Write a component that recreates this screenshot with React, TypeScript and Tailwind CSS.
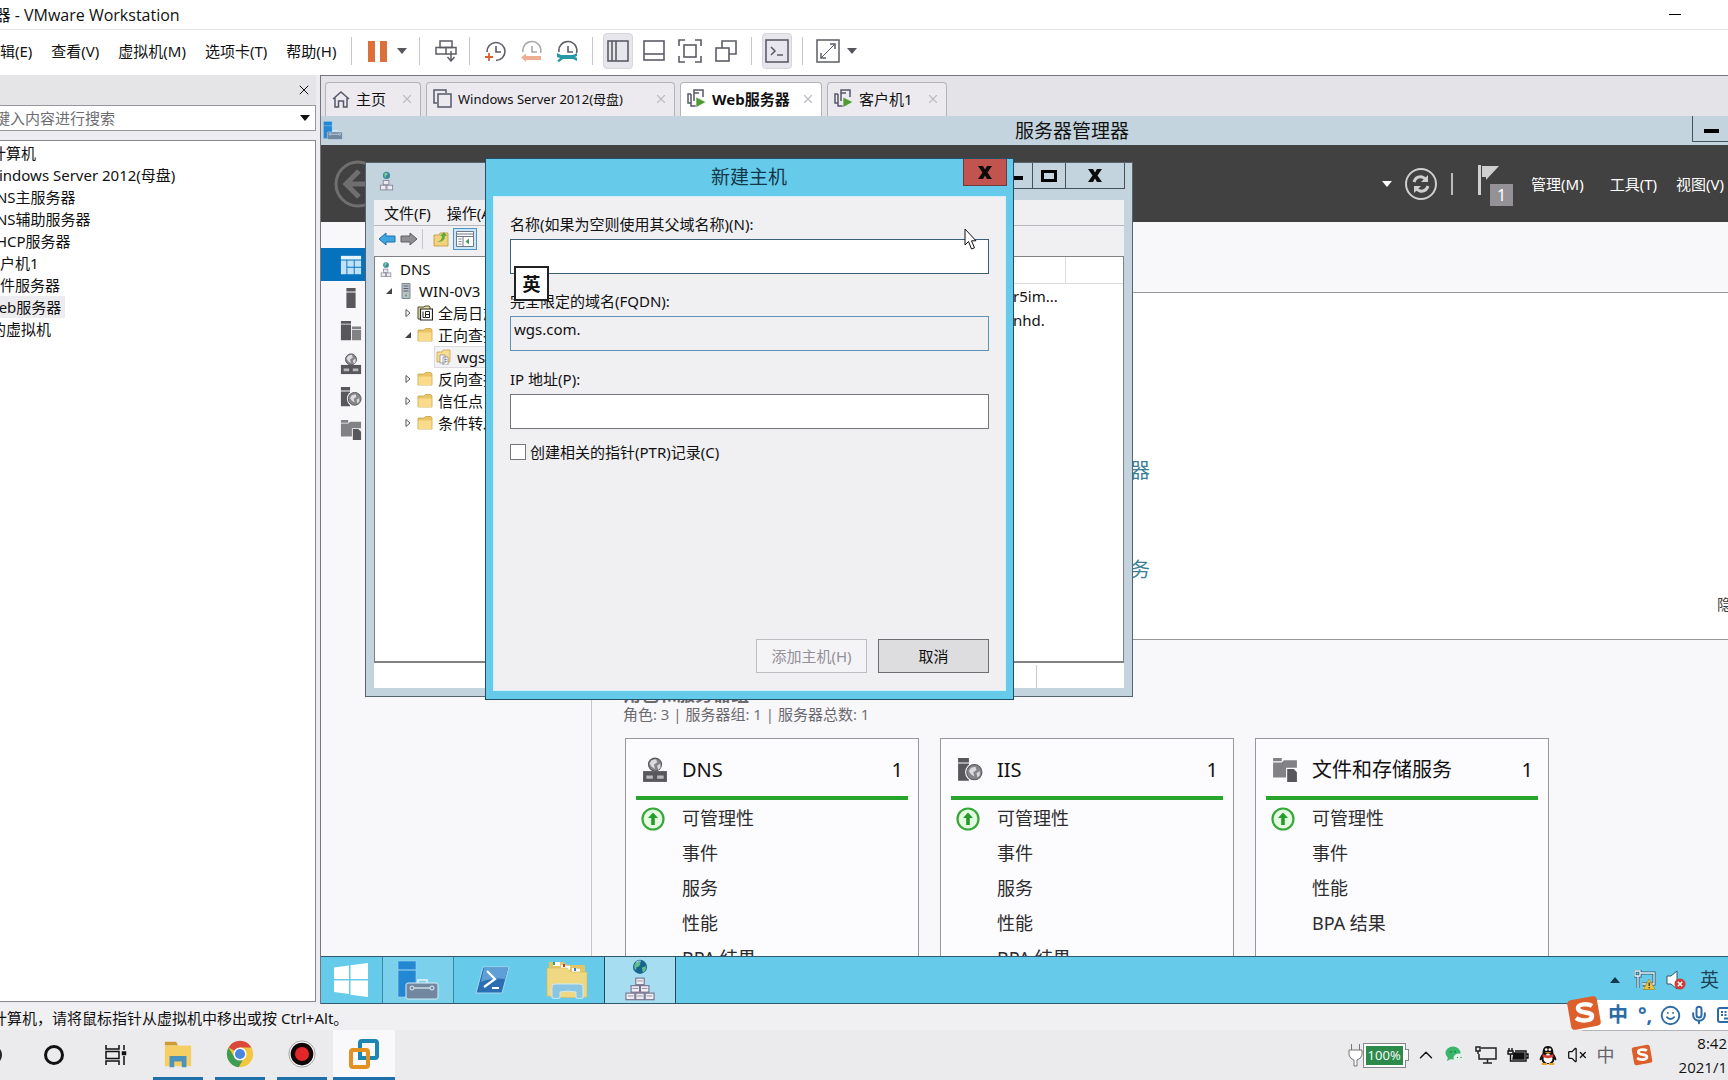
import React from "react";
import { ChevronUp, Mic, Smile, VolumeX, X } from "lucide-react";
import { clsx } from "clsx";

type IconProps = { className?: string };

/* ---------- icons ---------- */

const Caret = ({ className }: IconProps) => (
  <svg viewBox="0 0 10 6" className={clsx("h-[6px] w-[10px] shrink-0 fill-current", className)}>
    <path d="M0 0h10L5 6z" />
  </svg>
);

const SendKeysIcon = () => (
  <svg viewBox="0 0 22 22" className="size-[22px]" fill="none" stroke="#5c5d66" strokeWidth="1.5">
    <rect x="5" y="1" width="12" height="6.5" />
    <rect x="1" y="7.5" width="10" height="6.5" />
    <path d="M11 7.5h10V14H11M16 11v9M12.5 17l3.500 4 3.500-4" />
  </svg>
);

const ClockIcon = ({ cut, faded, children }: { cut?: boolean; faded?: boolean; children: React.ReactNode }) => (
  <svg viewBox="0 0 22 22" className="size-[22px]" fill="none">
    <path
      d={cut ? "M3 12a9 9 0 1 1 17.500 1M12 6v6h5" : "M3 12a9 9 0 1 1 9 8.500M12 6v6h5"}
      stroke={faded ? "#a9a6a8" : "#5c5d66"}
      strokeWidth="1.6"
    />
    {children}
  </svg>
);

const LibraryPaneIcon = () => (
  <svg viewBox="0 0 22 22" className="size-[22px]" fill="none" stroke="#5c5d66" strokeWidth="1.6">
    <rect x="1" y="1" width="20" height="20" />
    <path d="M5 1v20M9 1v20" />
  </svg>
);

const ThumbnailBarIcon = () => (
  <svg viewBox="0 0 22 22" className="size-[22px]" fill="none" stroke="#5c5d66" strokeWidth="1.6">
    <rect x="1" y="1" width="20" height="19" />
    <path d="M1 14h20" />
  </svg>
);

const FullFrameIcon = () => (
  <svg viewBox="0 0 24 24" className="size-[24px]" fill="none" stroke="#5c5d66" strokeWidth="1.6">
    <path d="M1 7V1h6M17 1h6v6M23 17v6h-6M7 23H1v-6" />
    <rect x="6" y="6" width="12" height="12" />
  </svg>
);

const UnityIcon = () => (
  <svg viewBox="0 0 22 22" className="size-[22px]" fill="none" stroke="#5c5d66" strokeWidth="1.6">
    <rect x="1" y="8" width="13" height="13" />
    <path d="M7 8V1h14v13h-7" />
  </svg>
);

const ConsoleIcon = () => (
  <svg viewBox="0 0 24 24" className="size-[24px]" fill="none" stroke="#5c5d66" strokeWidth="1.6">
    <rect x="1" y="1" width="22" height="22" />
    <path d="M6 8l4 4-4 4M12 16h6" />
  </svg>
);

const StretchIcon = () => (
  <svg viewBox="0 0 24 24" className="size-[24px]" fill="none" stroke="#5c5d66" strokeWidth="1.5">
    <rect x="1" y="1" width="22" height="22" />
    <path d="M14 5h5v5M10 19H5v-5" />
    <path d="M19 5L5 19" strokeWidth="1" />
  </svg>
);

const HomeIcon = () => (
  <svg viewBox="0 0 18 18" className="size-[18px] shrink-0" fill="none" stroke="#55586a" strokeWidth="1.5">
    <path d="M1 9l8-7 8 7M3 8v9h3.500v-6h5v6H15V8" />
  </svg>
);

const VmIcon = ({ running }: { running?: boolean }) => (
  <svg viewBox="0 0 19 19" className="size-[19px] shrink-0" fill="none" stroke="#55586a" strokeWidth="1.5">
    {running ? (
      <>
        <path d="M7 4V1h9v7M4 14H1V5h3M7 12V4h5M4 5v12h6" />
        <path d="M9 8l10 5-10 5.500z" fill="#4f9a35" stroke="#fff" strokeWidth="0.6" />
      </>
    ) : (
      <>
        <path d="M4 14H1V1h12v3" />
        <rect x="5" y="5" width="13" height="13" />
      </>
    )}
  </svg>
);

const ServerManagerIcon = ({ className }: IconProps) => (
  <svg viewBox="0 0 42 40" className={className}>
    <path fill="#2387d3" stroke="#9fd6f2" strokeWidth="0.6" d="M1 1h18v36H1z" />
    <path d="M1 10h18" stroke="#a9dcf5" />
    <path d="M21 23v-3h9v3" fill="none" stroke="#cfeaf7" strokeWidth="2" />
    <rect x="9" y="23" width="32" height="16" rx="2" fill="#7188a0" stroke="#d6edf8" />
    <path d="M13 28h24" stroke="#e6f2f8" strokeWidth="1.2" />
    <circle cx="15" cy="28" r="2" fill="#7188a0" stroke="#e6f2f8" />
    <circle cx="35" cy="28" r="2" fill="#7188a0" stroke="#e6f2f8" />
  </svg>
);

/* globe on top of a pyramid of servers */
const DnsTreeIcon = ({ className }: IconProps) => (
  <svg viewBox="0 0 32 44" className={className}>
    <circle cx="16" cy="8" r="7.500" fill="#17658f" />
    <path d="M11 4c3-3 7-1 5 2s-4 1-4 4-4-1-1-6zM18 9l4-2c1 4-1 6-3 7z" fill="#63c08c" />
    <path d="M12 3q3-2 5-1" stroke="#d8f2f5" fill="none" />
    <g fill="#efecf4" stroke="#77738a" strokeWidth="1.2">
      <rect x="11.500" y="20" width="9" height="7" />
      <rect x="6.500" y="28" width="9" height="7" />
      <rect x="16.500" y="28" width="9" height="7" />
      <rect x="1" y="36" width="9.500" height="7" />
      <rect x="11.500" y="36" width="9" height="7" />
      <rect x="21.500" y="36" width="9.500" height="7" />
    </g>
    <path d="M13 23h6M8 31h6M18 31h6M3 39h6M13 39h6M23 39h6" stroke="#77738a" strokeWidth="0.8" />
  </svg>
);

const SmallDnsIcon = ({ className }: IconProps) => (
  <svg viewBox="0 0 16 20" className={className}>
    <circle cx="8" cy="4" r="3.800" fill="#3b8a9c" />
    <path d="M6 2c2-2 4 0 3 1s-2 1-2 3-2-1-1-4z" fill="#7fce95" />
    <g fill="#eceaf0" stroke="#8d879a">
      <rect x="4.500" y="9.500" width="6" height="4.500" />
      <rect x="1.500" y="14.500" width="6" height="5" />
      <rect x="8.500" y="14.500" width="6" height="5" />
    </g>
  </svg>
);

const FolderIcon = () => (
  <svg viewBox="0 0 16 14" className="h-[14px] w-[16px] shrink-0">
    <path d="M1 2h6l1.500-1.500H14L15 2v11H1z" fill="#e9c567" stroke="#c9a449" strokeWidth="0.8" />
    <path d="M1.500 4.500h13V13h-13z" fill="#fadb8b" />
  </svg>
);

const ZoneIcon = () => (
  <svg viewBox="0 0 16 16" className="size-[16px] shrink-0">
    <path d="M1 3h5l1-2h7v12H1z" fill="#f7dc92" stroke="#caa650" strokeWidth="0.8" />
    <path d="M4 6h5v8H4zM7 8h5v8H7z" fill="#fff" stroke="#8c8c96" strokeWidth="0.8" />
    <path d="M8.500 10.500h2.500M8.500 12.500h2.500" stroke="#6a86b8" strokeWidth="0.8" />
  </svg>
);

const LogIcon = () => (
  <svg viewBox="0 0 16 16" className="size-[16px] shrink-0">
    <path d="M1 2h6l1-1h4l1 1v12H1z" fill="#e9dfa4" stroke="#4c4832" />
    <path d="M3.500 4h12v11h-12z" fill="#fff" stroke="#222" strokeWidth="1.2" />
    <path d="M6 6.500v6M8.500 6.500h4v6h-4zM8.500 9.500h4M6 12.500h2" stroke="#222" fill="none" />
  </svg>
);

const HostIcon = () => (
  <svg viewBox="0 0 10 16" className="h-[16px] w-[10px] shrink-0">
    <path d="M1 .5h8v15H1z" fill="#b9c1c8" stroke="#7e8890" />
    <path d="M2.500 3h5M2.500 5.500h5M2.500 8h5" stroke="#56616b" />
    <circle cx="5" cy="12.500" r="1" fill="#5c9b63" />
  </svg>
);

const Globe = ({ cx, cy, r }: { cx: number; cy: number; r: number }) => (
  <g>
    <circle cx={cx} cy={cy} r={r} fill="#85858a" stroke="#58585c" />
    <path
      d={`M${cx - 3} ${cy - 4}l4-1 1 3-3 2 1 4-3-2-2-3zM${cx + 2} ${cy + 1}l3-2v4l-2 2z`}
      fill="#dcdce0"
    />
  </g>
);

const RoleIcon = ({ kind, className }: IconProps & { kind: string }) => (
  <svg viewBox="0 0 24 24" className={className} fill="#58585c">
    {kind === "dashboard" && (
      <>
        <path fill="#e6f5fd" d="M1 2h22v4H1z" />
        <path fill="#bfe2f6" d="M1 7h6v15H1zM8 7h7v7H8zM16 7h7v7h-7zM8 15h7v7H8zM16 15h7v7h-7z" />
      </>
    )}
    {kind === "local" && <path d="M7 1h10v4H7zM7 6h10v17H7z" />}
    {kind === "all" && (
      <>
        <path d="M1 1h11v3H1zM1 5h11v17H1z" />
        <path fill="#828286" d="M13 7h10v3H13zM13 11h10v11H13z" />
      </>
    )}
    {kind === "dns" && (
      <>
        <Globe cx={12} cy={7} r={6} />
        <path d="M1 13h22v10H1z" />
        <path fill="#b9b9bd" d="M4 17h6v3H4zM14 17h6v3h-6z" />
      </>
    )}
    {kind === "iis" && (
      <>
        <path d="M1 1h10v4H1zM1 6h10v16H1z" />
        <circle cx="16" cy="14" r="8.500" fill="#fbfafd" />
        <Globe cx={16} cy={14} r={7} />
      </>
    )}
    {kind === "files" && (
      <>
        <path fill="#828286" d="M1 1h8v3H1zM1 5h8l2-2h12v7H13v9H1z" />
        <path d="M14 11h6l3 3v9h-9z" />
      </>
    )}
  </svg>
);

const UpCircle = () => (
  <svg viewBox="0 0 24 24" className="size-[24px]">
    <circle cx="12" cy="12" r="10.500" fill="#e4fbe2" stroke="#35a839" strokeWidth="2.2" />
    <path d="M12 5.500l5 5.500h-3.200v7h-3.600v-7H7z" fill="#259b2c" />
  </svg>
);

const SogouIcon = ({ className }: IconProps) => (
  <svg viewBox="0 0 36 36" className={className}>
    <rect x="3" y="3" width="30" height="30" rx="4" fill="#dd5f2b" transform="rotate(-10 18 18)" />
    <path
      d="M26 11c-4-3-14-2-14 2 0 6 14 3 14 8 0 6-12 5-16 2"
      fill="none"
      stroke="#fff"
      strokeWidth="4.5"
    />
  </svg>
);

const ExplorerIcon = ({ className }: IconProps) => (
  <svg viewBox="0 0 32 32" className={className}>
    <path fill="#d09a33" d="M2 3h12l2 4H2z" />
    <path fill="#f5cf63" d="M2 7h28v22H2z" />
    <path fill="#4b92bd" d="M7 30V18h18v12h-5v-6h-8v6z" />
  </svg>
);

const ServerExplorerIcon = () => (
  <svg viewBox="0 0 42 40" className="h-[40px] w-[42px]">
    <path fill="#e3c566" d="M3 2h14l4 3h18v12H3z" />
    <path fill="#fff" d="M7 2h7v4H7zM15 5l9 1v4h-9zM26 8l8 1v4h-8z" />
    <path fill="#c23d2e" d="M17 4h2v3h-2z" />
    <path fill="#4b9b50" d="M7 2h2v3H7z" />
    <path fill="#3d7fc0" d="M28 8h2v3h-2z" />
    <path fill="#f0d882" stroke="#d5b95c" strokeWidth="0.6" d="M1 8h20l4 4h16v25q-20 2-40-1z" />
    <path
      fill="#8ac6e2"
      stroke="#c9ecfa"
      d="M6 38V27q0-3 3-3h25q3 0 3 3v11q-4 1-7 0v-6q-8-2-16 0v6q-4 1-8 0z"
    />
  </svg>
);

const PowerShellIcon = () => (
  <svg viewBox="0 0 36 30" className="h-[30px] w-[36px]">
    <path fill="#2a6fb4" stroke="#a8d8f0" d="M9 2h26l-7 26H2z" />
    <path fill="#5f9fd6" d="M10 3h24l-3 11Q18 12 7 17z" />
    <path d="M13 6l8 8-11 8M18 23h7" fill="none" stroke="#fff" strokeWidth="2.2" />
  </svg>
);

const WindowsLogo = () => (
  <svg viewBox="0 0 34 34" className="size-[34px]" fill="#fff">
    <path d="M0 4.500L15 2.500V16H0zM16.500 2.300L34 0v16H16.500zM0 17.500h15V31L0 29zM16.500 17.500H34V34l-17.500-2.300z" />
  </svg>
);

const ChromeIcon = () => (
  <svg viewBox="0 0 32 32" className="size-[28px]">
    <circle cx="16" cy="16" r="15" fill="#f4c63d" />
    <path d="M16 16L3 8.500A15 15 0 0 1 29 8.500H16z" fill="#d9483b" />
    <path d="M3 8.500A15 15 0 0 0 14.500 31L21 19.500 9.500 19.500z" fill="#3f9c55" />
    <circle cx="16" cy="16" r="7.500" fill="#fff" />
    <circle cx="16" cy="16" r="5.800" fill="#4a85e0" />
  </svg>
);

const RecordIcon = () => (
  <svg viewBox="0 0 32 32" className="size-[28px]">
    <circle cx="16" cy="16" r="15" fill="#fff" stroke="#999" />
    <circle cx="16" cy="16" r="13" fill="#120707" />
    <circle cx="16" cy="16" r="8" fill="#e3262a" />
  </svg>
);

const VmwareIcon = () => (
  <svg viewBox="0 0 32 32" className="size-[32px]" fill="none" strokeWidth="4">
    <rect x="12" y="3" width="17" height="17" rx="2" stroke="#1b86b4" />
    <rect x="3" y="12" width="17" height="17" rx="2" stroke="#e2901f" />
    <path d="M12 15v5h5" stroke="#1b86b4" />
  </svg>
);

const TaskViewIcon = () => (
  <svg viewBox="0 0 22 20" className="h-[20px] w-[22px]" fill="none" stroke="#111" strokeWidth="1.5">
    <path d="M1 0v4h13V0M1 20v-4h13v4M1 6.500h13v7H1zM19 0v5M19 11v9" />
    <path d="M17.500 7h3v2.500h-3z" fill="#111" />
  </svg>
);

const QqIcon = () => (
  <svg viewBox="0 0 20 22" className="h-[20px] w-[18px]">
    <path d="M10 1c5 0 6 4 6 8 2 3 4 6 3 8l-2-1c0 3-2 5-7 5s-7-2-7-5l-2 1c-1-2 1-5 3-8 0-4 1-8 6-8z" fill="#111" />
    <ellipse cx="10" cy="15" rx="5" ry="5" fill="#fff" />
    <path d="M4 10q6 3 12 0v3q-6 3-12 0z" fill="#d83a34" />
    <circle cx="8" cy="5" r="1.500" fill="#fff" />
    <circle cx="12" cy="5" r="1.500" fill="#fff" />
    <path d="M6 8h8l-4 2zM3 20h6v2H3zM11 20h6v2h-6z" fill="#eaa22d" />
  </svg>
);

const WechatIcon = () => (
  <svg viewBox="0 0 20 18" className="h-[18px] w-[20px]">
    <ellipse cx="8" cy="7" rx="7.500" ry="6.500" fill="#39b56b" />
    <path d="M3 11l-1 4 4-2z" fill="#39b56b" />
    <ellipse cx="14" cy="12" rx="5.500" ry="4.500" fill="#e6efe9" />
    <path d="M5 5h1.500v1.500H5zM9.500 5H11v1.500H9.500zM12 11h1v1h-1zM15.500 11h1v1h-1z" fill="#1f7a44" />
  </svg>
);

const MonitorIcon = () => (
  <svg viewBox="0 0 22 18" className="h-[18px] w-[22px]" fill="none" stroke="#222" strokeWidth="1.5">
    <path d="M6 2h15v11H4V8M8 17h9M12.500 13v4M1 1h4v4H1zM3 5v3" />
  </svg>
);

const PlugBatteryIcon = () => (
  <svg viewBox="0 0 22 16" className="h-[16px] w-[22px]" fill="none" stroke="#111" strokeWidth="1.4">
    <path d="M2 1v3M5 1v3M1 4h5v3H1zM3.500 7v7H19V4H8M19 7h2v4h-2" />
    <path fill="#111" d="M7 6h10v6H6z" />
  </svg>
);

const PowerPlugIcon = () => (
  <svg viewBox="0 0 15 24" className="h-[24px] w-[15px]" fill="#fff" stroke="#777" strokeWidth="1">
    <path d="M3.500 1v6M11.500 1v6M1 7h13v5q-1 4-5 5v6H6v-6q-4-1-5-5z" />
  </svg>
);

const KeyboardIcon = () => (
  <svg viewBox="0 0 22 16" className="h-[16px] w-[22px] shrink-0">
    <rect x="1" y="1" width="20" height="14" rx="2" fill="none" stroke="#2c6ba5" strokeWidth="2" />
    <path d="M4 5h14M4 8h14" stroke="#2c6ba5" strokeWidth="2" strokeDasharray="2 1.5" />
    <path d="M7 11.500h8" stroke="#2c6ba5" strokeWidth="2" />
  </svg>
);

const GuestNetworkIcon = () => (
  <svg viewBox="0 0 22 20" className="h-[20px] w-[22px]">
    <path d="M6 3h14v11H8M4 6v12M1 1h5v5H1zM9 18h6" fill="none" stroke="#33566a" strokeWidth="3" />
    <path d="M6 3h14v11H8M4 6v12M1 1h5v5H1zM9 18h6" fill="none" stroke="#eaf6fb" strokeWidth="1.3" />
    <path d="M15 9l6 10.500H9.500z" fill="#eec33c" stroke="#a98420" strokeWidth="0.6" />
    <path d="M15.200 12.500v3.500M15.200 17v1.200" stroke="#333" strokeWidth="1.3" />
  </svg>
);

const GuestSpeakerIcon = () => (
  <svg viewBox="0 0 20 20" className="size-[20px]">
    <path d="M1 6h4l6-5v18l-6-5H1z" fill="#fff" stroke="#33566a" />
    <circle cx="14" cy="14" r="5.500" fill="#cf3a36" />
    <path d="M11.800 11.800l4.400 4.400M16.200 11.800l-4.400 4.400" stroke="#fff" strokeWidth="1.6" />
  </svg>
);

const RefreshIcon = () => (
  <svg viewBox="0 0 34 34" className="size-[34px]" fill="none" stroke="#cfcfcf">
    <circle cx="17" cy="17" r="15" strokeWidth="2" />
    <path d="M10 15q2-6 8-5l4 2M24 19q-2 6-8 5l-4-2" strokeWidth="3" />
    <path d="M24 8v7h-7zM10 26v-7h7z" fill="#cfcfcf" stroke="none" />
  </svg>
);

const FlagIcon = () => (
  <svg viewBox="0 0 36 44" className="h-[44px] w-[36px]">
    <path fill="#cfcfcf" d="M1 3h3v30H1zM5 4h17L9 18v-3H5z" />
    <rect x="13" y="22" width="23" height="22" fill="#959297" />
    <text x="24.500" y="39" fontSize="16" textAnchor="middle" fill="#fff">
      1
    </text>
  </svg>
);

const BackIcon = () => (
  <svg viewBox="0 0 48 48" className="size-[48px]" fill="none" stroke="#6f6f6f">
    <circle cx="24" cy="24" r="22" strokeWidth="3" />
    <path d="M38 24H13M25 11L12 24l13 13" strokeWidth="5" />
  </svg>
);

const ArrowIcon = ({ back }: { back?: boolean }) => (
  <svg viewBox="0 0 18 14" className="h-[14px] w-[18px]">
    {back ? (
      <path d="M1 7l7-6v3h9v6H8v3z" fill="#3ea5e0" stroke="#1f6ea8" />
    ) : (
      <path d="M17 7l-7-6v3H1v6h9v3z" fill="#8f8f93" stroke="#5e5e62" />
    )}
  </svg>
);

const UpFolderIcon = () => (
  <svg viewBox="0 0 16 16" className="size-[16px]">
    <path d="M1 4h5l1-2h8v13H1z" fill="#f2d27c" stroke="#b9973f" strokeWidth="0.8" />
    <path d="M4 11q5-1 5-6H7l4-4 3 4h-2q0 6-8 6z" fill="#5fae3d" />
  </svg>
);

const ConsolePaneIcon = () => (
  <svg viewBox="0 0 18 16" className="h-[16px] w-[18px]">
    <path d="M.5.5h17v15H.5z" fill="#fff" stroke="#6d7886" />
    <path d="M1 3h16M1 5.500h16M7 5.500V15" stroke="#6d7886" />
    <path d="M2.500 8h3M2.500 10.500h3M2.500 13h3" stroke="#6d7886" strokeWidth="0.9" />
    <path d="M13 7.500v6L9.500 10.500z" fill="#4c9a58" />
  </svg>
);

/* bold cross used by the guest's window frames */
const CloseGlyph = () => (
  <svg viewBox="0 0 14 13" className="h-[13px] w-[14px]">
    <path d="M0 0h5l2 3.500L9 0h5l-4.500 6.500L14 13H9L7 9.500 5 13H0l4.500-6.500z" fill="#0c0c0c" />
  </svg>
);

/* ---------- host window ---------- */

const MENUS = ["编辑(E)", "查看(V)", "虚拟机(M)", "选项卡(T)", "帮助(H)"];

const Separator = ({ className }: IconProps) => (
  <div className={clsx("w-px shrink-0 bg-[#c9c7cb]", className)} />
);

const ToolButton = ({
  label,
  active,
  children,
}: {
  label: string;
  active?: boolean;
  children: React.ReactNode;
}) => (
  <button
    aria-label={label}
    className={clsx(
      "flex h-9 w-[30px] items-center justify-center rounded-sm",
      active && "border border-[#d5d5dc] bg-[#e6e6ec]"
    )}
  >
    {children}
  </button>
);

const Toolbar = () => (
  <div className="flex h-[45px] shrink-0 items-center bg-white pb-[3px]">
    <nav className="-ml-[15px] flex gap-[19px]">
      {MENUS.map((menu) => (
        <button key={menu} className="shrink-0 whitespace-nowrap">
          {menu}
        </button>
      ))}
    </nav>
    <div className="ml-[15px] flex items-center">
      <Separator className="h-7" />
      <button aria-label="暂停" className="ml-4 flex gap-[5px]">
        <span className="h-[21px] w-[7px] bg-[#dc703a]" />
        <span className="h-[21px] w-[7px] bg-[#dc703a]" />
      </button>
      <button aria-label="电源选项" className="ml-[10px] text-[#55565c]">
        <Caret />
      </button>
      <Separator className="mr-[11px] ml-3 h-7" />
      <ToolButton label="发送 Ctrl+Alt+Del">
        <SendKeysIcon />
      </ToolButton>
      <Separator className="mr-[10px] ml-2 h-7" />
      <div className="flex gap-[6px]">
        <ToolButton label="拍摄快照">
          <ClockIcon>
            <path d="M1 17h8M5 13v8" stroke="#d9602f" strokeWidth="1.8" />
          </ClockIcon>
        </ToolButton>
        <ToolButton label="恢复快照">
          <ClockIcon cut faded>
            <path d="M1 17.500l5-4V16h15v4H6v2z" fill="#eeae93" />
          </ClockIcon>
        </ToolButton>
        <ToolButton label="管理快照">
          <ClockIcon cut>
            <path d="M1 13l4 2h12l4-2v3l-2 1 2 1v3l-4-2H7l-4 3-2-1 3-3-3-1z" fill="#2699a8" />
          </ClockIcon>
        </ToolButton>
      </div>
      <Separator className="mx-[10px] h-7" />
      <div className="flex gap-[6px]">
        <ToolButton label="库" active>
          <LibraryPaneIcon />
        </ToolButton>
        <ToolButton label="缩略图栏">
          <ThumbnailBarIcon />
        </ToolButton>
        <ToolButton label="全屏">
          <FullFrameIcon />
        </ToolButton>
        <ToolButton label="Unity">
          <UnityIcon />
        </ToolButton>
      </div>
      <Separator className="mx-[10px] h-7" />
      <ToolButton label="控制台视图" active>
        <ConsoleIcon />
      </ToolButton>
      <Separator className="mx-[10px] h-7" />
      <ToolButton label="拉伸">
        <StretchIcon />
      </ToolButton>
      <button aria-label="拉伸选项" className="ml-1 text-[#55565c]">
        <Caret />
      </button>
    </div>
  </div>
);

const VMS = [
  "Windows Server 2012(母盘)",
  "DNS主服务器",
  "DNS辅助服务器",
  "DHCP服务器",
  "客户机1",
  "文件服务器",
  "Web服务器",
];

const Library = () => (
  <aside className="flex w-[320px] shrink-0 flex-col bg-[#ededf1] pr-1">
    <div className="flex h-[30px] items-center justify-end bg-[#e5e5e8] pr-1">
      <button aria-label="关闭">
        <X className="size-4" strokeWidth={1.5} />
      </button>
    </div>
    <div className="flex h-[26px] items-center border border-l-0 border-[#98979e] bg-white pr-[5px]">
      <input
        aria-label="搜索"
        placeholder="在此处键入内容进行搜索"
        className="-ml-[50px] min-w-0 flex-1 bg-transparent outline-none placeholder:text-[#6d6d72]"
      />
      <button aria-label="筛选">
        <Caret />
      </button>
    </div>
    <div className="mt-[9px] mb-[2px] flex-1 border border-l-0 border-[#88878e] bg-white pt-px">
      <ul className="-ml-[39px] leading-[22px]">
        <li>我的计算机</li>
        {VMS.map((vm) => (
          <li key={vm} className="pl-6">
            <span className={clsx("inline-block pr-1", vm === "Web服务器" && "bg-[#ededf0]")}>
              {vm}
            </span>
          </li>
        ))}
        <li>共享的虚拟机</li>
      </ul>
    </div>
  </aside>
);

const TABS = [
  { label: "主页", width: "w-[96px]", icon: <HomeIcon /> },
  { label: "Windows Server 2012(母盘)", width: "w-[249px]", icon: <VmIcon />, small: true },
  { label: "Web服务器", width: "w-[142px]", icon: <VmIcon running />, active: true },
  { label: "客户机1", width: "w-[120px]", icon: <VmIcon running /> },
];

const Tabs = () => (
  <div className="flex h-[40px] shrink-0 items-end gap-[5px] bg-[#e4e3e7] pl-1">
    {TABS.map((tab) => (
      <div
        key={tab.label}
        className={clsx(
          "flex h-[34px] items-center rounded-t-sm border border-b-0 border-[#b3b2b8] px-[6px] pb-[2px]",
          tab.width,
          tab.active ? "bg-white" : "bg-[#eceaee]"
        )}
      >
        {tab.icon}
        <button
          className={clsx(
            "ml-[6px] whitespace-nowrap",
            tab.small ? "text-[13px]" : "text-[15px]",
            tab.active && "font-bold"
          )}
        >
          {tab.label}
        </button>
        <button aria-label="关闭标签" className="ml-auto text-[#bcbbc0]">
          <X className="size-[14px]" strokeWidth={2} />
        </button>
      </div>
    ))}
  </div>
);

/* ---------- guest desktop ---------- */

const NAV = ["dashboard", "local", "all", "dns", "iis", "files"];

const ROLES = [
  { kind: "dns", title: "DNS", items: ["可管理性", "事件", "服务", "性能", "BPA 结果"] },
  { kind: "iis", title: "IIS", items: ["可管理性", "事件", "服务", "性能", "BPA 结果"] },
  { kind: "files", title: "文件和存储服务", items: ["可管理性", "事件", "性能", "BPA 结果"] },
];

const RoleCard = ({ role }: { role: (typeof ROLES)[number] }) => (
  <section className="h-[300px] w-[294px] shrink-0 border border-[#98979c] bg-[#fcfbfe] px-[10px]">
    <header className="flex h-[57px] items-center pt-1 pr-[5px] pl-[6px] text-[20px]">
      <RoleIcon kind={role.kind} className="size-[26px]" />
      <h3 className="ml-[14px]">{role.title}</h3>
      <span className="ml-auto">1</span>
    </header>
    <div className="h-1 bg-[#28a52c]" />
    <ul className="pt-px text-[18px] leading-[33px] text-[#2c2c2e]">
      {role.items.map((item, i) => (
        <li key={item} className="flex h-[35px] items-center">
          <span className="w-[46px] pl-[5px]">{i === 0 && <UpCircle />}</span>
          {item}
        </li>
      ))}
    </ul>
  </section>
);

const ServerManager = () => (
  <div className="flex min-h-0 flex-1 flex-col overflow-hidden">
    <div className="flex h-[29px] shrink-0 items-start bg-[#c3d4de]">
      <ServerManagerIcon className="mt-[5px] ml-[2px] h-[19px] w-[20px]" />
      <h1 className="ml-[672px] flex-1 text-[19px] leading-[31px]">服务器管理器</h1>
      <button
        aria-label="最小化"
        className="flex h-[26px] w-[36px] items-center border border-t-0 border-r-0 border-[#45525c] pl-[11px]"
      >
        <span className="mt-1 h-1 w-[15px] bg-black" />
      </button>
    </div>
    <div className="flex h-[77px] shrink-0 items-center bg-[#414141] text-white">
      <div className="ml-[13px] flex-1">
        <BackIcon />
      </div>
      <Caret className="mr-3" />
      <button aria-label="刷新">
        <RefreshIcon />
      </button>
      <span className="mr-[24px] ml-[13px] h-[22px] w-[2px] bg-[#bcbcbc]" />
      <button aria-label="通知">
        <FlagIcon />
      </button>
      <nav className="ml-[18px] flex pr-1 whitespace-nowrap">
        <button className="mr-[26px]">管理(M)</button>
        <button className="mr-[19px]">工具(T)</button>
        <button>视图(V)</button>
      </nav>
    </div>
    <div className="flex min-h-0 flex-1 bg-[#f8f7fa]">
      <nav className="w-[271px] shrink-0 border-r border-[#c6c5ca] pt-[26px]">
        {NAV.map((kind) => (
          <button
            key={kind}
            aria-label={kind}
            className={clsx(
              "flex h-[33px] w-full items-center pl-[19px]",
              kind === "dashboard" && "bg-[#0671bd]"
            )}
          >
            <RoleIcon kind={kind} className="size-[22px]" />
          </button>
        ))}
      </nav>
      <main className="flex min-w-0 flex-1 flex-col overflow-hidden pt-[70px]">
        <div className="flex h-[348px] shrink-0 flex-col border-y border-[#98979c] bg-white pt-[163px] text-[20px] leading-[30px] text-[#3c7f96]">
          <span className="pl-[538px]">器</span>
          <span className="mt-[69px] pl-[538px]">务</span>
          <span className="-mr-[4px] mt-1 self-end text-[15px] text-[#3c3c3e]">隐</span>
        </div>
        <div className="pt-[44px] pl-[31px] font-['Open_Sans','Noto_Sans_CJK_SC',sans-serif] text-[#6b6a6e]">
          <h2 className="text-[18px] leading-[20px] font-bold">角色和服务器组</h2>
          <p className="leading-[20px]">角色: 3 | 服务器组: 1 | 服务器总数: 1</p>
        </div>
        <div className="mt-[14px] ml-[33px] flex gap-[21px]">
          {ROLES.map((role) => (
            <RoleCard key={role.kind} role={role} />
          ))}
        </div>
      </main>
    </div>
  </div>
);

const ZONES = [
  { label: "全局日志", icon: <LogIcon /> },
  { label: "正向查找区域", icon: <FolderIcon />, open: true },
  { label: "反向查找区域", icon: <FolderIcon /> },
  { label: "信任点", icon: <FolderIcon /> },
  { label: "条件转发器", icon: <FolderIcon /> },
];

const Twisty = ({ open }: { open?: boolean }) => (
  <svg viewBox="0 0 8 8" className="size-2 shrink-0">
    {open ? (
      <path d="M7 1v6H1z" fill="#444" />
    ) : (
      <path d="M2 .5v7L6 4z" fill="#fff" stroke="#555" />
    )}
  </svg>
);

const DnsWindow = () => (
  <div className="absolute top-[46px] left-[44px] flex h-[535px] w-[768px] flex-col border border-[#56646e] bg-[#c3d4de] px-2 pb-2">
    <div className="flex h-[37px] shrink-0 items-start justify-between">
      <SmallDnsIcon className="mt-2 ml-[5px] h-[20px] w-[15px]" />
      <div className="-mr-px flex h-[26px] border border-t-0 border-[#45525c]">
        <button aria-label="最小化" className="flex w-[33px] items-center justify-center border-r border-[#45525c]">
          <span className="mt-1 h-1 w-[14px] bg-black" />
        </button>
        <button aria-label="最大化" className="flex w-[33px] items-center justify-center border-r border-[#45525c]">
          <span className="h-[12px] w-[16px] border-[3px] border-black" />
        </button>
        <button aria-label="关闭" className="flex w-[58px] items-center justify-center">
          <CloseGlyph />
        </button>
      </div>
    </div>
    <nav className="flex h-[26px] shrink-0 items-center gap-4 border-b border-[#b9b8bd] bg-[#f0eff2] pl-[10px]">
      <button>文件(F)</button>
      <button>操作(A)</button>
    </nav>
    <div className="flex h-[30px] shrink-0 items-center bg-[#f0eff2] pb-1 pl-1">
      <button aria-label="后退">
        <ArrowIcon back />
      </button>
      <button aria-label="前进" className="ml-1">
        <ArrowIcon />
      </button>
      <Separator className="mr-[10px] ml-1 h-[20px]" />
      <button aria-label="上一级">
        <UpFolderIcon />
      </button>
      <button
        aria-label="显示控制台树"
        className="ml-1 flex h-[22px] w-[24px] items-center justify-center border border-[#4d93c6] bg-[#cde6f7]"
      >
        <ConsolePaneIcon />
      </button>
    </div>
    <div className="flex min-h-0 flex-1 border border-[#828188] bg-white">
      <div className="w-[300px] shrink-0 overflow-hidden pt-px leading-[22px] whitespace-nowrap">
        <div className="flex h-[22px] items-center pl-[5px]">
          <SmallDnsIcon className="mr-[8px] h-[17px] w-[12px]" />
          DNS
        </div>
        <div className="flex h-[22px] items-center gap-[8px] pl-[10px]">
          <Twisty open />
          <HostIcon />
          <span>WIN-0V3</span>
        </div>
        {ZONES.map((zone) => (
          <React.Fragment key={zone.label}>
            <div className="flex h-[22px] items-center gap-[5px] pl-[29px]">
              <Twisty open={zone.open} />
              {zone.icon}
              <span>{zone.label}</span>
            </div>
            {zone.open && (
              <div className="ml-[59px] flex h-[22px] items-center gap-[5px] border border-[#dcdbe0] bg-[#f3f2f5] pl-px">
                <ZoneIcon />
                <span>wgs.com</span>
              </div>
            )}
          </React.Fragment>
        ))}
      </div>
      <div className="flex-1 border-l border-[#828188]">
        <div className="flex h-[27px] border-b border-[#dcdbe0]">
          <div className="w-[390px] border-r border-[#dcdbe0]" />
        </div>
        <ul className="pl-[337px] leading-6">
          <li>r5im...</li>
          <li>nhd.</li>
        </ul>
      </div>
    </div>
    <div className="flex h-[26px] shrink-0 border-t border-[#828188] bg-white">
      <div className="mt-[2px] w-[663px] border-r border-[#c9c8cd]" />
    </div>
  </div>
);

const NewHostDialog = () => (
  <div
    role="dialog"
    aria-label="新建主机"
    className="absolute top-[42px] left-[164px] flex h-[542px] w-[529px] flex-col border border-[#1f5166] bg-[#66cbea] px-[7px] pb-2"
  >
    <div className="flex h-[37px] shrink-0 items-start">
      <h2 className="flex-1 pl-[42px] text-center text-[19px] leading-[36px] text-[#12384a]">新建主机</h2>
      <button
        aria-label="关闭"
        className="-mr-px flex h-[27px] w-[44px] items-center justify-center border border-t-0 border-[#6f3b3d] bg-[#c25450]"
      >
        <CloseGlyph />
      </button>
    </div>
    <form className="flex flex-1 flex-col border border-[#d5f1fa] bg-[#f0eff1] px-4 pt-[15px] pb-[17px]">
      <label htmlFor="host-name" className="leading-[24px]">
        名称(如果为空则使用其父域名称)(N):
      </label>
      <input
        id="host-name"
        type="text"
        className="mt-[3px] h-[35px] border border-[#3c5f78] bg-white px-1 outline-none"
      />
      <label htmlFor="host-fqdn" className="mt-[15px] leading-[24px]">
        完全限定的域名(FQDN):
      </label>
      <input
        id="host-fqdn"
        type="text"
        readOnly
        value="wgs.com."
        className="mt-[3px] h-[35px] border border-[#5d93b4] bg-[#f0eff1] px-[3px] pb-[10px] outline-none"
      />
      <label htmlFor="host-ip" className="mt-4 leading-[24px]">
        IP 地址(P):
      </label>
      <input
        id="host-ip"
        type="text"
        className="mt-[3px] h-[35px] border border-[#76757a] bg-white px-1 outline-none"
      />
      <label htmlFor="host-ptr" className="mt-[11px] flex items-center leading-[24px]">
        <input
          id="host-ptr"
          type="checkbox"
          className="mr-1 size-4 appearance-none border border-[#76757a] bg-white"
        />
        创建相关的指针(PTR)记录(C)
      </label>
      <div className="mt-auto flex justify-end gap-[11px]">
        <button
          type="button"
          disabled
          className="h-[34px] w-[111px] border border-[#bdbcc1] bg-[#f4f3f6] text-[#929196]"
        >
          添加主机(H)
        </button>
        <button type="button" className="h-[34px] w-[111px] border border-[#6e6d72] bg-[#dddcde]">
          取消
        </button>
      </div>
    </form>
    {/* IME state popup, sits over the first two fields */}
    <div className="absolute top-[107px] left-[28px] flex size-[35px] items-center justify-center border-2 border-[#222] bg-white text-[18px] font-bold">
      英
    </div>
    <svg viewBox="0 0 14 22" className="absolute top-[69px] left-[478px] h-[22px] w-[14px]">
      <path d="M1 1v16l3.500-3.500L7.500 21l3-1.200-3-7H12z" fill="#fff" stroke="#111" />
    </svg>
  </div>
);

const GuestTaskbar = () => (
  <div className="flex h-[48px] shrink-0 items-stretch border-y border-[#2c5b70] bg-[#66cbea]">
    <button aria-label="开始" className="flex w-[61px] items-center justify-center pr-px">
      <WindowsLogo />
    </button>
    <button
      aria-label="服务器管理器"
      className="flex w-[72px] items-center justify-center border-x border-[#3b86a2] bg-[#7bd0eb]"
    >
      <ServerManagerIcon className="h-[40px] w-[42px]" />
    </button>
    <button aria-label="PowerShell" className="flex w-[75px] items-center justify-center">
      <PowerShellIcon />
    </button>
    <button aria-label="资源管理器" className="flex w-[75px] items-center justify-center">
      <ServerExplorerIcon />
    </button>
    <button
      aria-label="DNS"
      className="flex w-[72px] items-center justify-center border-x border-[#20495b] bg-[#a6ddf0]"
    >
      <DnsTreeIcon className="h-[42px] w-[30px]" />
    </button>
    <div className="ml-auto flex items-center gap-[10px] pr-[9px]">
      <Caret className="mr-1 rotate-180 text-[#12384a]" />
      <GuestNetworkIcon />
      <GuestSpeakerIcon />
      <span className="ml-1 text-[19px] text-[#1d4456]">英</span>
    </div>
  </div>
);

/* ---------- host bottom ---------- */

const StatusBar = () => (
  <div className="relative flex h-[26px] shrink-0 items-center bg-[#f0eff2]">
    <p className="-ml-[98px] pt-px whitespace-nowrap">
      要返回到您的计算机，请将鼠标指针从虚拟机中移出或按 Ctrl+Alt。
    </p>
    {/* floating input-method bar */}
    <div className="absolute right-0 -bottom-px flex h-[31px] w-[146px] items-center overflow-hidden border-b border-[#b5b4b9] bg-white pl-[26px] text-[#2c6ba5]">
      <span className="text-[20px] font-bold">中</span>
      <span className="ml-[10px] w-[18px] text-[20px] font-bold whitespace-nowrap">°,</span>
      <Smile className="ml-[8px] size-[21px] shrink-0" strokeWidth={2.2} />
      <Mic className="mx-[8px] size-[20px] shrink-0" strokeWidth={2.4} />
      <KeyboardIcon />
    </div>
    <SogouIcon className="absolute right-[126px] -bottom-px size-[36px]" />
  </div>
);

const APPS = [
  { name: "搜索", icon: <span className="size-5 rounded-full border-2 border-[#222]" /> },
  { name: "Cortana", icon: <span className="size-[20px] rounded-full border-[3px] border-[#111]" /> },
  { name: "任务视图", icon: <TaskViewIcon /> },
  { name: "文件资源管理器", icon: <ExplorerIcon className="size-[30px]" />, open: true },
  { name: "Chrome", icon: <ChromeIcon />, open: true },
  { name: "录制", icon: <RecordIcon />, open: true },
  { name: "VMware", icon: <VmwareIcon />, open: true, active: true },
];

const HostTaskbar = () => (
  <div className="flex h-[50px] shrink-0 bg-[#ebebed]">
    <div className="-ml-[39px] flex">
      {APPS.map((app) => (
        <button
          key={app.name}
          aria-label={app.name}
          className={clsx("flex w-[62px] flex-col items-center", app.active && "bg-[#f9f9fb]")}
        >
          <span className="flex flex-1 items-center">{app.icon}</span>
          {app.open && (
            <span className={clsx("h-[3px] bg-[#1f6fa8]", app.active ? "w-full" : "w-[50px]")} />
          )}
        </button>
      ))}
    </div>
    <div className="ml-auto flex items-center">
      <PowerPlugIcon />
      <span className="ml-px flex h-[23px] w-[41px] items-center justify-center border-2 border-white bg-[#2c8a4b] font-['Open_Sans',sans-serif] text-[13px] text-white outline outline-[#88878c]">
        100%
      </span>
      <span className="h-3 w-[4px] border border-l-0 border-[#88878c] bg-white" />
      <button aria-label="显示隐藏的图标" className="ml-[6px]">
        <ChevronUp className="size-[22px]" strokeWidth={1.5} />
      </button>
      <div className="ml-[8px] flex items-center gap-[10px]">
        <WechatIcon />
        <MonitorIcon />
        <PlugBatteryIcon />
        <QqIcon />
        <VolumeX className="size-[20px]" strokeWidth={1.5} />
        <span className="text-[18px] text-[#66656b]">中</span>
        <SogouIcon className="ml-[6px] size-[22px]" />
      </div>
      <div className="ml-[26px] pr-px text-right font-['Open_Sans',sans-serif] leading-[24px]">
        <div>8:42</div>
        <div>2021/1</div>
      </div>
    </div>
  </div>
);

export default function App() {
  return (
    <div className="flex h-screen flex-col overflow-hidden bg-white font-['Noto_Sans','Noto_Sans_CJK_SC',sans-serif] text-[15px] leading-[22px] text-[#111]">
      <div className="flex h-[30px] shrink-0 items-center justify-between border-b border-[#e3e2e6] pr-[47px]">
        <span className="-ml-[71px] font-['Open_Sans','Noto_Sans_CJK_SC',sans-serif] text-base whitespace-nowrap">
          Web服务器 - VMware Workstation
        </span>
        <button aria-label="最小化" className="h-px w-3 bg-black" />
      </div>
      <Toolbar />
      <div className="flex min-h-0 flex-1">
        <Library />
        <div className="flex min-w-0 flex-1 flex-col border-t border-l border-[#77767e]">
          <Tabs />
          <div className="relative flex min-h-0 flex-1 flex-col overflow-hidden">
            <ServerManager />
            <GuestTaskbar />
            <DnsWindow />
            <NewHostDialog />
          </div>
        </div>
      </div>
      <StatusBar />
      <HostTaskbar />
    </div>
  );
}
